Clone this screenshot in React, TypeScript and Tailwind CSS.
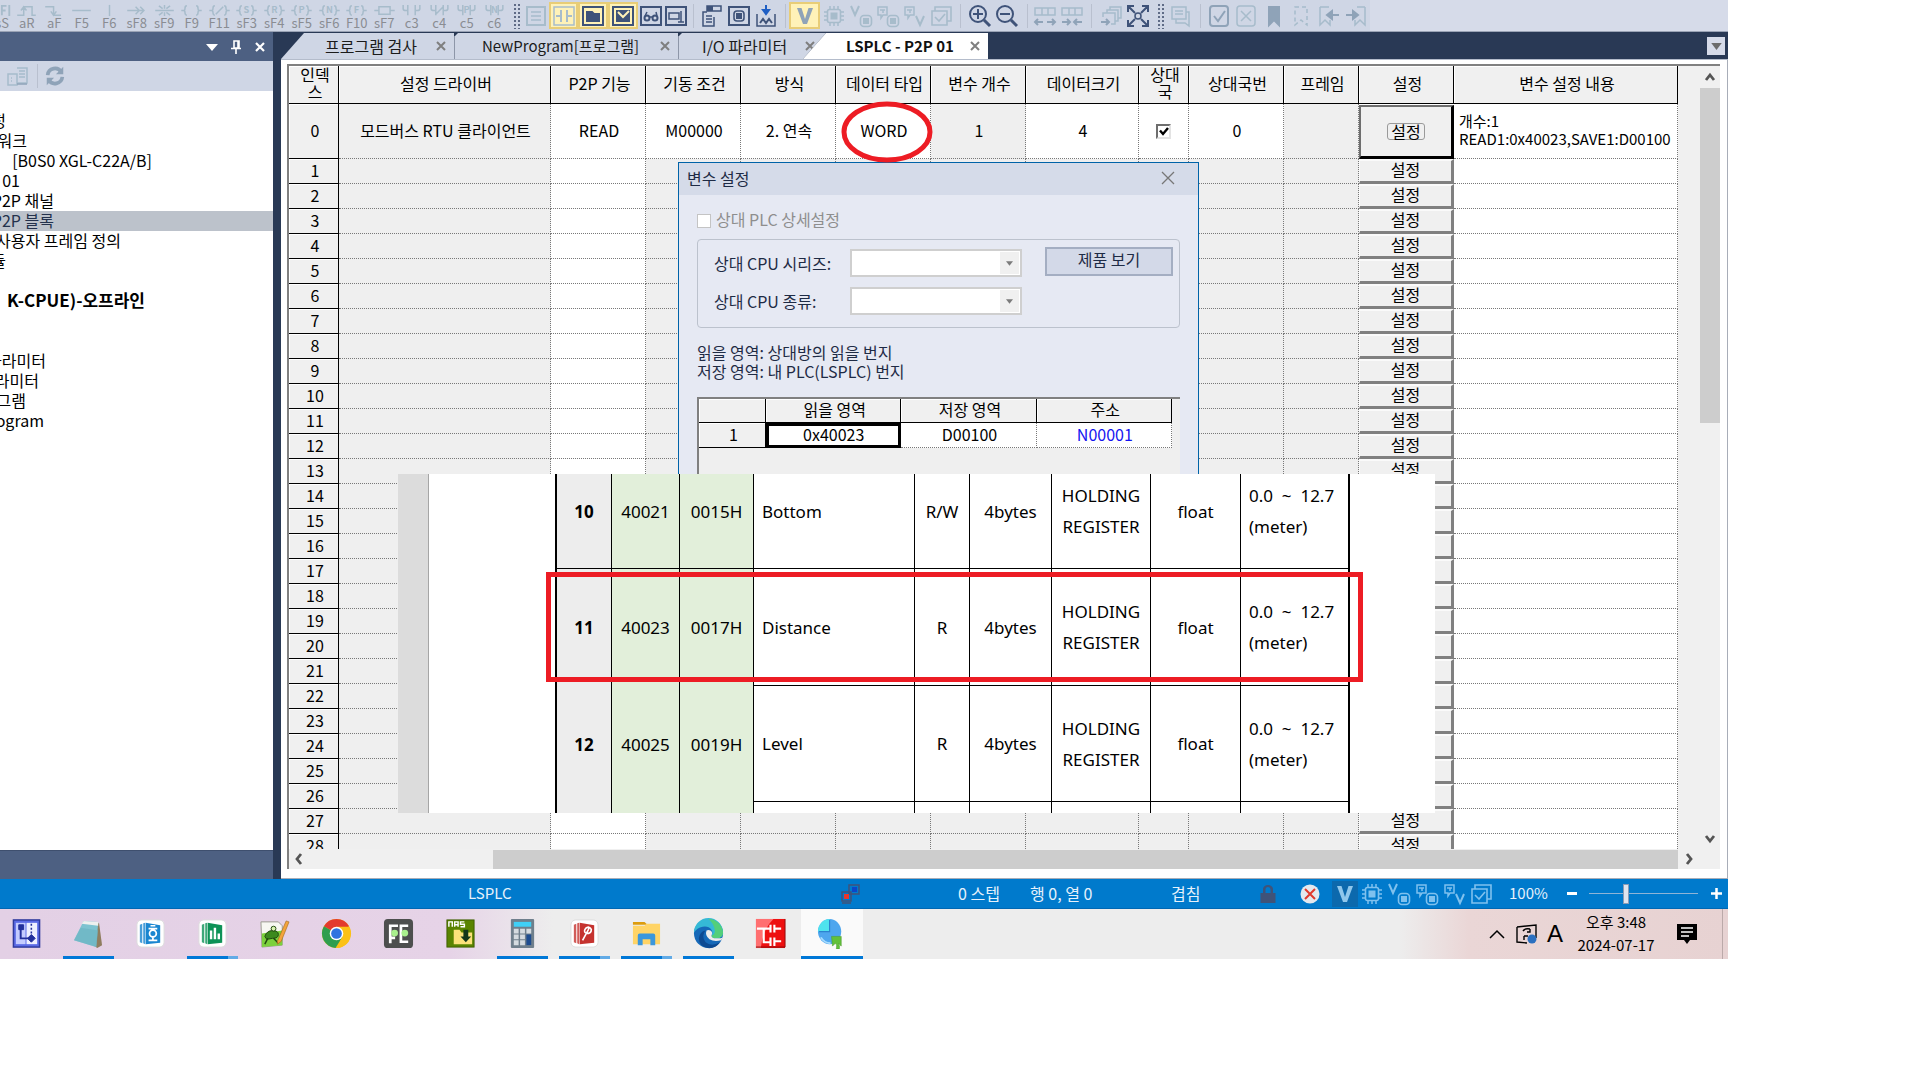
import React from "react";

const DIM = "#a7bccb";
const MID = "#8fa3b8";
const DARK = "#3f5379";

/* ---------- ladder tool bar ---------- */

const ladderTools: { label: string; kind: string }[] = [
  { label: "aR", kind: "rise" },
  { label: "aF", kind: "fall" },
  { label: "F5", kind: "hline" },
  { label: "F6", kind: "vline" },
  { label: "sF8", kind: "arrow" },
  { label: "sF9", kind: "star" },
  { label: "F9", kind: "coil" },
  { label: "F11", kind: "coilN" },
  { label: "sF3", kind: "S" },
  { label: "sF4", kind: "R" },
  { label: "sF5", kind: "P" },
  { label: "sF6", kind: "N" },
  { label: "F10", kind: "F" },
  { label: "sF7", kind: "box" },
  { label: "c3", kind: "c" },
  { label: "c4", kind: "cN" },
  { label: "c5", kind: "cP" },
  { label: "c6", kind: "cNN" },
];

const braces = "M3 7h3M9 2q-2 0-2 2.500t-1.500 2.500q1.500 0 1.500 2.500t2 2.500M19 2q2 0 2 2.500t1.500 2.500q-1.500 0-1.500 2.500t-2 2.500M22 7h3";
const shortContact = "M5 1v4q0 2 3 2h2v-6M10 7v5M23 1v4q0 2-3 2h-2v-6M18 7v5";

const ladderPaths: Record<string, string> = {
  rise: "M4 12h7V3h9v9h4M8 7l3-4 3 4",
  fall: "M4 3h9v9h8M13 3v9M10 8l3 4 3-4",
  hline: "M4 7h20",
  vline: "M14 1v12",
  arrow: "M4 7h18M13 3l4 4-4 4M18 3l4 4-4 4",
  star: "M4 7h20M14 1v4M14 9v4M8 2l4 3M20 2l-4 3M8 12l4-3M20 12l-4-3",
  coil: braces,
  coilN: braces + "M10 11l8-8",
  S: braces,
  R: braces,
  P: braces,
  N: braces,
  F: braces,
  box: "M3 7h5M20 7h5M8 3h12v8H8z",
  c: shortContact,
  cN: shortContact + "M10 11l8-8",
  cP: shortContact,
  cNN: shortContact,
};
const ladderLetters: Record<string, string> = { S: "S", R: "R", P: "P", N: "N", F: "F", cP: "P", cNN: "N" };

function LadderGlyph({ kind }: { kind: string }) {
  return (
    <svg viewBox="0 0 28 14" className="h-[13px] w-[27px]" fill="none" stroke={DIM} strokeWidth="1.6">
      <path d={ladderPaths[kind]} />
      {ladderLetters[kind] && (
        <text x="14" y="10" fontSize="10" fontWeight="700" textAnchor="middle" stroke="none" fill={DIM}>
          {ladderLetters[kind]}
        </text>
      )}
    </svg>
  );
}

/* ---------- icon tool bar ---------- */

function Svg({ children, color = DARK, size = "h-6 w-6" }: { children: React.ReactNode; color?: string; size?: string }) {
  return (
    <svg viewBox="0 0 24 24" className={size} fill="none" stroke={color} strokeWidth="2">
      {children}
    </svg>
  );
}

const chipBody = (c: string) => (
  <>
    <rect x="5.500" y="5.500" width="13" height="13" rx="2" strokeWidth="1.600" />
    <rect x="8.500" y="8.500" width="7" height="7" fill={c} stroke="none" />
    <path d="M8 2v3M12 2v3M16 2v3M8 19v3M12 19v3M16 19v3M2 8h3M2 12h3M2 16h3M19 8h3M19 12h3M19 16h3" strokeWidth="1.500" />
  </>
);
const smallChip = (c: string) => (
  <>
    <rect x="11.500" y="11.500" width="11" height="11" rx="3.500" strokeWidth="1.600" />
    <rect x="14" y="14" width="6" height="6" fill={c} stroke="none" />
  </>
);

function ToolIcon({ name, c }: { name: string; c: string }) {
  switch (name) {
    case "list":
      return <Svg color={c}><rect x="3" y="3" width="18" height="18" /><path d="M7 8h10M7 12h10M7 16h10" strokeWidth="1.500" /></Svg>;
    case "contact":
      return <Svg color={c}><rect x="2" y="3" width="20" height="18" strokeWidth="1.500" /><path d="M4 12h5M9 6v12M15 6v12M15 12h5" /></Svg>;
    case "folder":
      return <Svg color={c}><rect x="2" y="3" width="20" height="18" /><path d="M6 17V8h5l2 2h5v7z" fill={c} /></Svg>;
    case "mail":
      return <Svg color={c}><rect x="2" y="3" width="20" height="18" /><path d="M6 7h12v10H6z" fill={c} /><path d="M7 8l5 5 6-6" stroke="#fff2b8" /></Svg>;
    case "glasses":
      return <Svg color={c}><rect x="2" y="3" width="20" height="18" /><circle cx="8" cy="14" r="2.500" /><circle cx="16" cy="14" r="2.500" /><path d="M6 12l2-4M18 12l-1-4M11 13h2" strokeWidth="1.500" /></Svg>;
    case "form":
      return <Svg color={c}><rect x="2" y="3" width="20" height="18" /><path d="M5 9h10v6H5zM17 7v11M14 18h6" strokeWidth="1.500" /></Svg>;
    case "props":
      return <Svg color={c}><path d="M8 8H4v14h11v-9M7 12h6M7 15h6M7 18h6" strokeWidth="1.500" /><path d="M8 2h14v5H8z" strokeWidth="1.500" /><path d="M8 2h6v5H8z" fill={c} stroke="none" /></Svg>;
    case "chipbox":
      return <Svg color={c}><rect x="2" y="3" width="20" height="18" /><rect x="7" y="7" width="10" height="10" rx="3" strokeWidth="1.600" /><rect x="9" y="9" width="6" height="6" fill={c} stroke="none" /></Svg>;
    case "download":
      return <Svg color={c}><path d="M3 10v12h18V10" strokeWidth="1.500" /><path d="M6 19l3-4 3 4 3-4 3 4" /><path d="M12 1v8M9 6l3 4 3-4z" stroke="#1f5fc4" fill="#1f5fc4" /></Svg>;
    case "V":
      return <Svg color={c}><path d="M4 4h4.500l3.500 11 3.500-11H20l-6 16h-4z" fill={c} stroke="none" /></Svg>;
    case "chip":
      return <Svg color={c}>{chipBody(c)}</Svg>;
    case "vchip":
      return <Svg color={c}><path d="M2 2l4 9 4-9" />{smallChip(c)}</Svg>;
    case "tchip":
      return <Svg color={c}><path d="M2 3h9v8H7l-2 3v-3H2zM4 6h5M7 6v3" strokeWidth="1.500" />{smallChip(c)}</Svg>;
    case "tv":
      return <Svg color={c}><path d="M2 3h9v8H7l-2 3v-3H2zM4 6h5M7 6v3" strokeWidth="1.500" /><path d="M13 12l4 9 4-9" /></Svg>;
    case "stack":
      return <Svg color={c}><path d="M2 7h15v14H2zM5 7V3h16v14h-4M5 13l4 4 6-7" strokeWidth="1.600" /></Svg>;
    case "zoomin":
      return <Svg color={c}><circle cx="10" cy="10" r="8" /><path d="M16 16l6 6" strokeWidth="3" /><path d="M5 10h10M10 5v10" /></Svg>;
    case "zoomout":
      return <Svg color={c}><circle cx="10" cy="10" r="8" /><path d="M16 16l6 6" strokeWidth="3" /><path d="M5 10h10" /></Svg>;
    case "widen":
      return <Svg color={c}><path d="M2 4h20v7H2zM9 4v7M15 4v7" strokeWidth="1.500" /><path d="M10 18H2M5 15l-3 3 3 3M14 18h8M19 15l3 3-3 3" stroke={MID} /></Svg>;
    case "narrow":
      return <Svg color={c}><path d="M2 4h20v7H2zM9 4v7M15 4v7" strokeWidth="1.500" /><path d="M2 18h8M7 15l3 3-3 3M22 18h-8M17 15l-3 3 3 3" stroke={MID} /></Svg>;
    case "cards":
      return <Svg color={c}><path d="M4 13V9h12v11h-4M8 9V6h11v11h-3M11 6V3h11v11h-3" strokeWidth="1.500" /><path d="M2 18h8M7 15l3 3-3 3" stroke={MID} /></Svg>;
    case "expand":
      return <Svg color={c}><path d="M2 8V2h6M16 2h6v6M22 16v6h-6M8 22H2v-6M3 3l6 6M21 3l-6 6M21 21l-6-6M3 21l6-6" /><circle cx="12" cy="12" r="3" strokeWidth="1.500" /></Svg>;
    case "comments":
      return <Svg color={c}><path d="M3 3h14v12H3zM6 7h8M6 10h8M7 15v4h9l4 3V8h-3" strokeWidth="1.500" /></Svg>;
    case "check":
      return <Svg color={c}><rect x="3" y="2" width="18" height="20" rx="3" /><path d="M7 12l4 5 7-10" stroke={MID} /></Svg>;
    case "cross":
      return <Svg color={c}><rect x="3" y="2" width="18" height="20" rx="3" strokeWidth="1.500" /><path d="M7 7l10 10M17 7L7 17" strokeWidth="1.500" /></Svg>;
    case "mark":
      return <Svg color={MID}><path d="M7 3h10v18l-5-5-5 5z" fill={MID} /></Svg>;
    case "marks":
      return <Svg color={c}><path d="M6 3h12v18l-6-5-6 5z" strokeDasharray="4 3" strokeWidth="1.500" /></Svg>;
    case "prev":
      return <Svg color={c}><path d="M3 3h9M3 3v18l5-5 5 5v-5" strokeWidth="1.500" /><path d="M22 11h-11M15 7l-5 4 5 4z" stroke={MID} fill={MID} /></Svg>;
    default:
      return <Svg color={c}><path d="M21 3h-8M21 3v18l-5-5-5 5v-5" strokeWidth="1.500" /><path d="M2 11h11M9 7l5 4-5 4z" stroke={MID} fill={MID} /></Svg>;
  }
}

type Tool = [name: string, color: string, on?: boolean];

function ToolGroup({ tools, width }: { tools: Tool[]; width: string }) {
  return (
    <div className={`flex h-full items-center ${width}`}>
      {tools.map(([name, c, on]) => (
        <button
          key={name}
          aria-label={name}
          className={`flex h-[27px] flex-1 items-center justify-center ${on ? "border-2 border-[#e8cd77] bg-[#fff2b8]" : ""}`}
        >
          <ToolIcon name={name} c={c} />
        </button>
      ))}
    </div>
  );
}
const Sep = ({ m }: { m: string }) => <div className={`h-6 w-px bg-[#b9c0cf] ${m}`} />;
const Handle = () => (
  <div className="h-[26px] w-[8px] bg-[radial-gradient(circle,#5f6b86_1px,transparent_1px)] bg-[size:4px_4px]" />
);

function Toolbar() {
  return (
    <div className="flex h-8 shrink-0 items-center overflow-hidden border-b border-[#9aa3b5] bg-[#d6dbe9]">
      <div className="flex h-full items-center bg-[#cfd6e5]">
        <button className="flex h-full w-[13px] flex-col items-end pt-1 text-[13px] leading-[12px] text-[#8a8d93]">
          <svg viewBox="0 0 14 14" className="h-[13px] w-[13px]" fill="none" stroke={DIM} strokeWidth="2">
            <path d="M2 12V2h5M2 7h4M10 1v12" />
          </svg>
          <span className="pr-1">sS</span>
        </button>
        <div className="flex h-full w-[495px] items-start pt-1">
          {ladderTools.map((t) => (
            <button key={t.label} className="flex flex-1 flex-col items-center text-[13px] leading-[12px] text-[#8a8d93]">
              <LadderGlyph kind={t.kind} />
              <span>{t.label}</span>
            </button>
          ))}
        </div>
        <div className="w-[5px]" />
        <Handle />
        <div className="w-[2px]" />
        <ToolGroup
          width="w-[166px]"
          tools={[["list", DIM], ["contact", DIM, true], ["folder", DARK, true], ["mail", DARK, true], ["glasses", DARK], ["form", DARK]]}
        />
        <Sep m="ml-1 mr-[3px]" />
        <ToolGroup width="w-[83px]" tools={[["props", DARK], ["chipbox", DARK], ["download", DARK]]} />
        <Sep m="ml-[5px] mr-[3px]" />
        <ToolGroup
          width="w-[166px]"
          tools={[["V", MID, true], ["chip", DIM], ["vchip", DIM], ["tchip", DIM], ["tv", DIM], ["stack", DIM]]}
        />
        <Sep m="mx-[5px]" />
        <ToolGroup width="w-[55px]" tools={[["zoomin", DARK], ["zoomout", DARK]]} />
        <Sep m="ml-[6px] mr-[3px]" />
        <ToolGroup width="w-[55px]" tools={[["widen", DIM], ["narrow", DIM]]} />
        <Sep m="mx-[5px]" />
        <ToolGroup width="w-[55px]" tools={[["cards", DIM], ["expand", DARK]]} />
        <div className="w-[5px]" />
        <Handle />
        <div className="w-[2px]" />
        <ToolGroup width="w-[28px]" tools={[["comments", DIM]]} />
        <Sep m="ml-[5px] mr-1" />
        <ToolGroup
          width="w-[165px]"
          tools={[["check", MID], ["cross", DIM], ["mark", DIM], ["marks", DIM], ["prev", DIM], ["next", DIM]]}
        />
      </div>
    </div>
  );
}

/* ---------- project tree ---------- */

const treeRows: { text: string; width: string; bold?: boolean; on?: boolean }[] = [
  { text: "정", width: "w-[6px]" },
  { text: "워크", width: "w-[27px]" },
  { text: "[B0S0 XGL-C22A/B]", width: "w-[152px]" },
  { text: "01", width: "w-[20px]" },
  { text: "P2P 채널", width: "w-[54px]" },
  { text: "P2P 블록", width: "w-[54px]", on: true },
  { text: "사용자 프레임 정의", width: "w-[121px]" },
  { text: "듈", width: "w-[6px]" },
  { text: "", width: "w-[6px]" },
  { text: "K-CPUE)-오프라인", width: "w-[145px]", bold: true },
  { text: "", width: "w-[6px]" },
  { text: "", width: "w-[6px]" },
  { text: "파라미터", width: "w-[46px]" },
  { text: "라미터", width: "w-[39px]" },
  { text: "그램", width: "w-[26px]" },
  { text: "ogram", width: "w-[44px]" },
];

function Sidebar() {
  return (
    <aside className="flex w-[273px] shrink-0 flex-col bg-white">
      <div className="flex h-[29px] shrink-0 items-center justify-end gap-[12px] bg-[#4d6082] pr-[7px] text-white">
        <button aria-label="메뉴">
          <svg viewBox="0 0 12 8" className="h-[8px] w-[12px]" fill="currentColor"><path d="M0 1h12L6 8z" /></svg>
        </button>
        <button aria-label="고정">
          <svg viewBox="0 0 12 14" className="h-[14px] w-[12px]" fill="none" stroke="currentColor" strokeWidth="1.600">
            <path d="M4 1h5v7H4zM8 1v7M1 8.500h10M6 9v5" />
          </svg>
        </button>
        <button aria-label="닫기">
          <svg viewBox="0 0 12 12" className="h-[12px] w-[12px]" fill="none" stroke="currentColor" strokeWidth="2.200"><path d="M2 2l8 8M10 2l-8 8" /></svg>
        </button>
      </div>
      <div className="flex h-[30px] shrink-0 items-center bg-[#cfd6e5] pl-[7px]">
        <svg viewBox="0 0 22 20" className="h-5 w-[22px]" fill="none" stroke={DIM} strokeWidth="1.500">
          <path d="M1 8h9v11H1zM10 2h10v15h-10M12 5h6M12 8h6M12 11h6M4 12h1M4 15h1" />
          <path d="M10 18h10" stroke={MID} />
        </svg>
        <div className="ml-2 h-6 w-px bg-[#b9c0cf]" />
        <svg viewBox="0 0 24 24" className="ml-[6px] h-[22px] w-[22px]" fill="none" stroke={MID} strokeWidth="4">
          <path d="M4 11a8 8 0 0 1 15-3M20 13a8 8 0 0 1-15 3" />
          <path d="M21 2v8h-8zM3 22v-8h8z" fill={MID} stroke="none" />
        </svg>
      </div>
      <div className="min-h-0 flex-1 overflow-hidden pt-5 text-[16px] leading-5 text-black">
        {treeRows.map((r, i) => (
          <div key={i} className={`h-5 ${r.on ? "bg-[#bcc2cb] text-[#24324d]" : ""}`}>
            <div className={`flex h-5 justify-end overflow-hidden whitespace-nowrap leading-[18px] ${r.width} ${r.bold ? "text-[17px] font-bold" : ""}`}>
              {r.text}
            </div>
          </div>
        ))}
      </div>
      <div className="h-[29px] shrink-0 border-t border-[#3e4f6e] bg-[#4d6082]" />
    </aside>
  );
}

/* ---------- document tabs ---------- */

function CloseMark({ className = "" }: { className?: string }) {
  return (
    <svg viewBox="0 0 10 10" className={`h-[10px] w-[10px] ${className}`} fill="none" stroke="#7f7f7f" strokeWidth="2">
      <path d="M1 1l8 8M9 1l-8 8" />
    </svg>
  );
}

function Tabs() {
  return (
    <div className="flex h-[28px] shrink-0 items-end border-b border-[#b4bccb] bg-[#293955] text-[16px] leading-[24px] text-[#1b1b1b]">
      <button className="flex h-[26px] w-[173px] items-center justify-between bg-[#cfd6e5] pl-[44px] pr-[8px] [clip-path:polygon(23px_0,100%_0,100%_100%,0_100%)]">
        <span className="pb-px">프로그램 검사</span><CloseMark />
      </button>
      <button className="flex h-[26px] w-[224px] items-center justify-between border-l border-[#8d96a8] bg-[#cfd6e5] pl-[27px] pr-[8px] text-[15px] [clip-path:polygon(4px_0,100%_0,100%_100%,0_100%,0_4px)]">
        <span className="pb-px">NewProgram[프로그램]</span><CloseMark />
      </button>
      <button className="flex h-[26px] w-[148px] items-center justify-between border-l border-[#8d96a8] bg-[#cfd6e5] pl-[23px] pr-[11px] [clip-path:polygon(4px_0,100%_0,125px_100%,0_100%,0_4px)]">
        <span className="pb-px">I/O 파라미터</span><CloseMark />
      </button>
      <button className="-ml-[23px] flex h-[26px] w-[185px] items-center justify-between bg-white pl-[43px] pr-[8px] text-[15px] font-bold text-[#111] [clip-path:polygon(23px_0,100%_0,100%_100%,0_100%)]">
        <span className="pb-px">LSPLC - P2P 01</span><CloseMark />
      </button>
      <div className="flex-1" />
      <button aria-label="탭 목록" className="mb-1 mr-[3px] flex h-[18px] w-[18px] items-center justify-center bg-[#d6dbe9]">
        <svg viewBox="0 0 12 8" className="h-[7px] w-[11px]" fill="#6b6b6b"><path d="M0 0h12L6 8z" /></svg>
      </button>
    </div>
  );
}

/* ---------- P2P block grid ---------- */

const headers = ["설정 드라이버", "P2P 기능", "기동 조건", "방식", "데이터 타입", "변수 개수", "데이터크기", "상대국", "상대국번", "프레임", "설정", "변수 설정 내용"];
const dotted = "border-b border-r border-dotted border-[#787878] p-0 pb-[3px] pl-[2px]";
const idx = "border-b border-r border-black bg-[#f0f0f0] p-0 pb-[3px] pl-[3px] font-normal shadow-[inset_1px_1px_0_#fff]";

function BlockGrid() {
  return (
    <table className="w-full table-fixed border-separate border-spacing-0 text-center text-[16px] leading-[18px] text-black">
      <colgroup>
        <col className="w-[50px]" /><col className="w-[212px]" /><col className="w-[95px]" /><col className="w-[95px]" />
        <col className="w-[95px]" /><col className="w-[95px]" /><col className="w-[95px]" /><col className="w-[113px]" />
        <col className="w-[50px]" /><col className="w-[95px]" /><col className="w-[75px]" /><col className="w-[95px]" /><col />
      </colgroup>
      <thead>
        <tr className="h-[38px]">
          <th className={idx}><span className="mx-auto block w-8 break-all leading-[17px]">인덱스</span></th>
          {headers.map((h, i) => (
            <th key={i} className={idx}>
              {h === "상대국" ? <span className="mx-auto block w-8 break-all leading-[17px]">{h}</span> : h}
            </th>
          ))}
        </tr>
      </thead>
      <tbody>
        <tr className="h-[55px]">
          <th className={idx}>0</th>
          <td className={`${dotted} bg-[#efefef]`}>모드버스 RTU 클라이언트</td>
          <td className={dotted}>READ</td>
          <td className={dotted}>M00000</td>
          <td className={dotted}>2. 연속</td>
          <td className={dotted}>WORD</td>
          <td className={`${dotted} bg-[#efefef]`}>1</td>
          <td className={dotted}>4</td>
          <td className="border-b border-r border-dotted border-[#787878] p-0">
            <label className="mx-auto grid h-[15px] w-[15px]">
              <input
                type="checkbox"
                defaultChecked
                aria-label="상대국"
                className="col-start-1 row-start-1 h-[15px] w-[15px] appearance-none border-2 border-b-[#e3e3e3] border-l-[#6e6e6e] border-r-[#e3e3e3] border-t-[#6e6e6e] bg-white"
              />
              <svg viewBox="0 0 15 15" className="pointer-events-none col-start-1 row-start-1 h-[15px] w-[15px]" fill="none" stroke="#000" strokeWidth="2.400">
                <path d="M4 6.500l3 3.500 5-6" />
              </svg>
            </label>
          </td>
          <td className={dotted}>0</td>
          <td className={`${dotted} bg-[#efefef]`} />
          <td className="h-[55px] p-0">
            <button className="block h-[54px] w-full border-b-[3px] border-l-2 border-r-[3px] border-t-2 border-b-black border-l-[#6e6e6e] border-r-black border-t-[#6e6e6e] bg-[#f0f0f0]">
              <span className="inline-block rounded-[3px] border border-[#9a9a9a] px-[3px] leading-[15px]">설정</span>
            </button>
          </td>
          <td className="whitespace-nowrap border-b border-r border-dotted border-[#787878] p-0 pb-[3px] pl-[5px] text-left text-[15px] leading-[18px]">
            개수:1
            <br />
            READ1:0x40023,SAVE1:D00100
          </td>
        </tr>
        {Array.from({ length: 28 }, (_, i) => i + 1).map((n) => (
          <tr key={n} className="h-[25px]">
            <th className={idx}>{n}</th>
            <td className={`${dotted} bg-[#efefef]`} />
            <td className={dotted} />
            {Array.from({ length: 8 }, (_, k) => (
              <td key={k} className={`${dotted} bg-[#efefef]`} />
            ))}
            <td className="h-[25px] p-0">
              <button className="block h-[25px] w-full border-b-[3px] border-l border-r-[3px] border-t-2 border-b-[#808080] border-l-[#fafafa] border-r-[#808080] border-t-[#fafafa] bg-[#f0f0f0] pb-1 leading-4">
                설정
              </button>
            </td>
            <td className={dotted} />
          </tr>
        ))}
      </tbody>
    </table>
  );
}

function Arrow({ d }: { d: string }) {
  return (
    <svg viewBox="0 0 12 12" className="h-[12px] w-[12px]" fill="none" stroke="#555" strokeWidth="2.800"><path d={d} /></svg>
  );
}

function Editor() {
  return (
    <div className="flex min-h-0 flex-1 flex-col border-b border-r border-[#a8adb8] bg-white pb-[9px] pl-[6px] pr-[7px] pt-1">
      <div className="flex min-h-0 flex-1 flex-col border-l-2 border-t-2 border-[#808080]">
        <div className="flex min-h-0 flex-1 overflow-hidden">
          <div className="min-w-0 flex-1 overflow-hidden"><BlockGrid /></div>
          <div className="w-[22px] bg-[#f0f0f0]" />
          <div className="flex w-[20px] flex-col items-center bg-[#f0f0f0]">
            <button aria-label="위로" className="flex h-[22px] items-center"><Arrow d="M2 9l4-5 4 5" /></button>
            <div className="h-[335px] w-full bg-[#cdcdcd]" />
            <div className="flex-1" />
            <button aria-label="아래로" className="flex h-5 items-center"><Arrow d="M2 3l4 5 4-5" /></button>
          </div>
        </div>
        <div className="flex h-5 shrink-0 items-center bg-[#f0f0f0]">
          <button aria-label="왼쪽" className="flex w-5 justify-center"><Arrow d="M8 1L4 6l4 5" /></button>
          <div className="w-[184px]" />
          <div className="h-[19px] flex-1 bg-[#cdcdcd]" />
          <button aria-label="오른쪽" className="flex w-[22px] justify-center"><Arrow d="M4 1l4 5-4 5" /></button>
          <div className="w-5" />
        </div>
      </div>
    </div>
  );
}

/* ---------- variable dialog ---------- */

function Picker({ id, label, gap }: { id: string; label: string; gap: string }) {
  return (
    <div className={`flex items-center ${gap}`}>
      <label htmlFor={id} className="w-[136px]">{label}</label>
      <div className="grid h-[28px] w-[172px]">
        <select id={id} disabled className="col-start-1 row-start-1 appearance-none border-2 border-[#cfcfcf] bg-white opacity-100">
          <option></option>
        </select>
        <span className="pointer-events-none col-start-1 row-start-1 my-[3px] mr-[3px] flex w-[19px] items-center justify-center justify-self-end bg-[#f0f0f0]">
          <svg viewBox="0 0 8 5" className="h-[5px] w-[7px]" fill="#7b7b7b"><path d="M0 0h8L4 5z" /></svg>
        </span>
      </div>
    </div>
  );
}

function VariableDialog() {
  return (
    <section className="absolute left-[678px] top-[162px] h-[314px] w-[521px] overflow-hidden border border-b-0 border-[#0063a8] bg-[#e6e9f3] text-[16px] leading-[19px] text-[#1e2b45]">
      <div className="flex h-[32px] items-center justify-between bg-[#d5dbe9] pb-[2px] pl-2 pr-[23px]">
        <h2>변수 설정</h2>
        <button aria-label="닫기">
          <svg viewBox="0 0 14 14" className="h-[14px] w-[14px]" fill="none" stroke="#777" strokeWidth="1.300"><path d="M1 1l12 12M13 1L1 13" /></svg>
        </button>
      </div>
      <div className="px-[18px]">
        <label className="mt-[16px] flex h-[20px] items-center gap-[5px] text-[#8e8e8e]">
          <input type="checkbox" disabled className="h-[14px] w-[14px] appearance-none border border-[#c4c4c4] bg-white" />
          <span className="pb-[3px]">상대 PLC 상세설정</span>
        </label>
        <div className="mt-[8px] flex h-[89px] justify-between rounded border border-[#bcc2cd] pl-[16px] pr-[6px] pt-[9px]">
          <div>
            <Picker id="cpu-series" label="상대 CPU 시리즈:" gap="" />
            <Picker id="cpu-kind" label="상대 CPU 종류:" gap="mt-[10px]" />
          </div>
          <button className="-mt-[2px] h-[29px] w-[128px] border-2 border-[#a4aec2] bg-[#d3d9e8] pb-1">제품 보기</button>
        </div>
        <p className="mt-[15px]">읽을 영역: 상대방의 읽을 번지</p>
        <p>저장 영역: 내 PLC(LSPLC) 번지</p>
        <div className="mt-[16px] h-20 border-l-2 border-t-2 border-[#808080] bg-[#efefef] pr-[8px] text-black">
          <table className="w-full table-fixed border-separate border-spacing-0 text-center leading-[18px]">
            <colgroup><col className="w-[67px]" /><col /><col /><col /></colgroup>
            <thead>
              <tr className="h-[24px]">
                {["", "읽을 영역", "저장 영역", "주소"].map((h, i) => (
                  <th key={i} className={idx}>{h}</th>
                ))}
              </tr>
            </thead>
            <tbody>
              <tr className="h-[25px]">
                <th className={idx}>1</th>
                <td className="border-[3px] border-black bg-white p-0 pb-[2px] leading-[17px]">0x40023</td>
                <td className={`${dotted} bg-white`}>D00100</td>
                <td className={`${dotted} bg-white text-[#1414f0]`}>N00001</td>
              </tr>
            </tbody>
          </table>
        </div>
      </div>
    </section>
  );
}

/* ---------- register map excerpt ---------- */

const registers = [
  { no: "10", addr: "40021", hex: "0015H", name: "Bottom", rw: "R/W", row: "h-[95px]", pad: "pb-5" },
  { no: "11", addr: "40023", hex: "0017H", name: "Distance", rw: "R", row: "h-[117px]", pad: "" },
  { no: "12", addr: "40025", hex: "0019H", name: "Level", rw: "R", row: "h-[116px]", pad: "" },
];

function RegisterMap() {
  const cell = "border-b border-r border-black p-0";
  return (
    <section className="absolute left-[398px] top-[474px] flex h-[339px] w-[1037px] overflow-hidden bg-white">
      <div className="w-[31px] border-r border-[#a6a6a6] bg-[#dcdcdc]" />
      <table className="ml-[126px] w-[795px] table-fixed border-separate border-spacing-0 self-start border-l-2 border-black font-['Noto_Sans','Noto_Sans_CJK_KR',sans-serif] text-[17px] leading-[31px] text-black">
        <colgroup>
          <col className="w-[55px]" /><col className="w-[68px]" /><col className="w-[74px]" /><col className="w-[161px]" />
          <col className="w-[55px]" /><col className="w-[82px]" /><col className="w-[99px]" /><col className="w-[90px]" /><col />
        </colgroup>
        <tbody className="text-center">
          {registers.map((r, i) => {
            const side = i === 0 ? cell : "border-r border-black p-0";
            return (
              <tr key={r.no} className={r.row}>
                <th className={`${side} bg-[#ededed]`}><div className={r.pad}>{r.no}</div></th>
                <td className={`${side} bg-[#e2efda]`}><div className={r.pad}>{r.addr}</div></td>
                <td className={`${side} bg-[#e2efda]`}><div className={r.pad}>{r.hex}</div></td>
                <td className={`${cell} text-left`}><div className={`pl-2 ${r.pad}`}>{r.name}</div></td>
                <td className={cell}><div className={r.pad}>{r.rw}</div></td>
                <td className={cell}><div className={r.pad}>4bytes</div></td>
                <td className={cell}><div className={r.pad}>HOLDING<br />REGISTER</div></td>
                <td className={cell}><div className={r.pad}>float</div></td>
                <td className="border-b border-r-2 border-black p-0 text-left"><div className={`whitespace-pre pl-2 ${r.pad}`}>0.0  ~  12.7<br />(meter)</div></td>
              </tr>
            );
          })}
          <tr className="h-[11px]">
            <td className="border-r border-black bg-[#ededed]" />
            <td className="border-r border-black bg-[#e2efda]" />
            <td className="border-r border-black bg-[#e2efda]" />
            <td className="border-r border-black" />
            <td className="border-r border-black" />
            <td className="border-r border-black" />
            <td className="border-r border-black" />
            <td className="border-r border-black" />
            <td className="border-r-2 border-black" />
          </tr>
        </tbody>
      </table>
    </section>
  );
}

/* ---------- status bar ---------- */

function StatusBar() {
  const light = "#7fc1ee";
  return (
    <footer className="flex h-[30px] shrink-0 items-center border-b border-[#0067b3] bg-[#007acc] text-[15px] text-[#e6f1fb]">
      <div className="pl-[468px]">LSPLC</div>
      <div className="flex-1" />
      <div className="w-[118px]">
        <svg viewBox="0 0 20 20" className="h-5 w-5" fill="none" stroke="#3f5379" strokeWidth="1.500">
          <rect x="9" y="1" width="10" height="9" /><rect x="12" y="3" width="5" height="5" fill="#0b45c9" stroke="none" />
          <rect x="2" y="8" width="9" height="9" /><rect x="4" y="10" width="5" height="5" fill="#e8372c" stroke="none" />
          <path d="M2 19h9" />
        </svg>
      </div>
      <div className="w-[72px] pb-px text-[16px]">0 스텝</div>
      <div className="w-[141px] pb-px text-[16px]">행 0, 열 0</div>
      <div className="w-[88px] pb-px text-[16px]">겹침</div>
      <svg viewBox="0 0 18 20" className="h-5 w-[18px]" fill="#3f5379">
        <path d="M4 9V5a5 4 0 0 1 10 0v4h-2.500V5.500a2.500 2.500 0 0 0-5 0V9zM1.500 9h15v10h-15z" />
      </svg>
      <svg viewBox="0 0 20 20" className="ml-[23px] h-5 w-5" fill="none">
        <circle cx="10" cy="10" r="9.500" fill="#e3e8ee" /><path d="M5 5l10 10M15 5L5 15" stroke="#e0392d" strokeWidth="2" />
      </svg>
      <div className="ml-[12px] flex h-[26px] w-[26px] items-center justify-center bg-[#0c69ad]">
        <ToolIcon name="V" c="#8fc7ec" />
      </div>
      <div className="flex w-[138px] items-center">
        {["chip", "vchip", "tchip", "tv", "stack"].map((n) => (
          <span key={n} className="flex flex-1 justify-center"><ToolIcon name={n} c={light} /></span>
        ))}
      </div>
      <div className="ml-[13px] w-[58px]">100%</div>
      <button aria-label="축소" className="h-[3px] w-[10px] bg-white" />
      <input
        type="range"
        aria-label="확대 비율"
        defaultValue={33}
        className="ml-[12px] h-5 w-[109px] appearance-none bg-[linear-gradient(#8fb4d6,#8fb4d6)] bg-[size:100%_1px] bg-center bg-no-repeat [&::-webkit-slider-thumb]:h-5 [&::-webkit-slider-thumb]:w-[6px] [&::-webkit-slider-thumb]:appearance-none [&::-webkit-slider-thumb]:border [&::-webkit-slider-thumb]:border-[#8a9bb5] [&::-webkit-slider-thumb]:bg-[#dfe4ee]"
      />
      <button aria-label="확대" className="ml-[13px] mr-[6px]">
        <svg viewBox="0 0 11 11" className="h-[11px] w-[11px]" stroke="#fff" strokeWidth="2.500"><path d="M5.500 0v11M0 5.500h11" /></svg>
      </button>
    </footer>
  );
}

/* ---------- task bar ---------- */

const books = (color: string, inner: React.ReactNode) => (
  <>
    <rect x="2" y="2" width="28" height="28" rx="5" fill="#fff" stroke="#dcdcdc" />
    <path d="M5 7l2.500-1v20l-2.500-1zM8.500 5.500l2-.5v22l-2-1z" fill={color} opacity=".8" />
    <path d="M11 5l15 2.500v18L11 27z" fill={color} />
    {inner}
  </>
);

const taskApps: { name: string; run?: "one" | "many" | "active"; icon: React.ReactNode }[] = [
  {
    name: "XG-PD",
    icon: (
      <>
        <rect x="2.500" y="2" width="27" height="28" fill="#5b6be6" stroke="#2f3a9c" strokeWidth="1.500" />
        <rect x="5" y="5" width="10" height="22" fill="#c4ccff" /><rect x="16" y="5" width="11" height="22" fill="#eef0ff" />
        <path d="M10 10v11h8" fill="none" stroke="#22309c" strokeWidth="2" />
        <path d="M8 7h5v5H8zM21 17l4 4-4 4-4-4z" fill="#22309c" stroke="#22309c" />
        <path d="M21 6v12" stroke="#22309c" strokeWidth="1.600" strokeDasharray="2 2" />
      </>
    ),
  },
  {
    name: "메모장",
    run: "one",
    icon: (
      <>
        <path d="M25 4l2 2 3 22-5 3-8-6z" fill="#8f7d5f" />
        <path d="M11 3l15 1-2 26-23-7z" fill="#7dc3d0" /><path d="M11 3l15 1v4l-17-2z" fill="#eef0ee" />
        <path d="M8 10l18 3-2 17-23-7z" fill="#69b3c2" opacity=".6" />
      </>
    ),
  },
  { name: "한글", run: undefined, icon: books("#1a86d0", <path d="M14 11h9M16 8h5M18.500 12.500a3.500 3.500 0 1 1 0 7 3.500 3.500 0 0 1 0-7M18.500 19.500v3M14 23h9" fill="none" stroke="#fff" strokeWidth="1.800" />) },
  { name: "한셀", run: "many", icon: books("#0d9257", <path d="M14.500 13v9M18.500 10v12M22.500 16v6" stroke="#fff" strokeWidth="2.500" />) },
  {
    name: "Notepad++",
    icon: (
      <>
        <path d="M2 4h18l4 4v20l-21 2z" fill="#f7f7f2" stroke="#9b9b90" /><path d="M3 16l21-3v15l-21 2z" fill="#7bd13c" />
        <path d="M6 19q2-6 8-6t6 4-6 4l-6 1z" fill="#3c8a1e" stroke="#20480f" />
        <path d="M9 21l-3 6M15 21l5 5" stroke="#20480f" strokeWidth="1.500" />
        <circle cx="15" cy="11" r="2.500" fill="#d9f2b0" stroke="#20480f" />
        <path d="M19 24L28 3l3 1-8 20-4 3z" fill="#f3a43b" stroke="#a0661a" strokeWidth=".6" />
      </>
    ),
  },
  {
    name: "Chrome",
    icon: (
      <>
        <circle cx="16" cy="16" r="15" fill="#fbc116" />
        <path d="M16 16L3 8.500A15 15 0 0 1 29 8.500z" fill="#e33b2e" />
        <path d="M16 16L3 8.500A15 15 0 0 0 15 31l7-11.500z" fill="#2f9e4f" />
        <path d="M16 9h13a15 15 0 0 1-13 22l6-11z" fill="#fbc116" />
        <circle cx="16" cy="16" r="7" fill="#fff" /><circle cx="16" cy="16" r="5.500" fill="#2f74e0" />
      </>
    ),
  },
  {
    name: "RealTerm",
    icon: (
      <>
        <rect x="1" y="1" width="30" height="30" rx="4" fill="#4d4f4e" />
        <path d="M7.500 26V8h8M7.500 20.500h5M26 8h-7.500v16.500H26" stroke="#fff" strokeWidth="2.800" fill="none" />
        <circle cx="12" cy="15.500" r="3.500" fill="#a9f08d" /><circle cx="22.500" cy="15.500" r="3.500" fill="#a9f08d" />
      </>
    ),
  },
  {
    name: "NAS",
    icon: (
      <>
        <rect x="2" y="2" width="28" height="28" fill="#5a8400" stroke="#3f6000" />
        <path d="M4 9V4h3.500v5M10 9V4h3.500v5M10 7h3.500M20 4h-4v2.500h4V9h-4" fill="none" stroke="#fff" strokeWidth="1.500" />
        <path d="M9 12h6l2 3h11v12H9z" fill="#fbe27a" /><path d="M19 12h5v7h3l-5.500 6L16 19h3z" fill="#12361a" />
      </>
    ),
  },
  {
    name: "계산기",
    run: "one",
    icon: (
      <>
        <rect x="4" y="1" width="24" height="30" rx="1" fill="#6f7f8c" /><rect x="7" y="4" width="18" height="5" fill="#3fd0f7" />
        <path d="M7 11h5v5H7zM13.500 11h5v5h-5zM20 11h5v5h-5zM7 17h5v5H7zM13.500 17h5v5h-5zM7 23h5v5H7zM13.500 23h5v5h-5z" fill="#d5dbe0" />
        <path d="M20 17h5v11h-5z" fill="#1e4c8f" />
      </>
    ),
  },
  { name: "한PDF", run: "many", icon: books("#c5332f", <path d="M14 23l6-11q2-4-2-2-4 4 0 6 5 0 5-4-1-3-4-2" fill="none" stroke="#fff" strokeWidth="1.700" />) },
  {
    name: "탐색기",
    run: "many",
    icon: (
      <>
        <path d="M2 4h12l3 3H2z" fill="#dd9c0c" /><path d="M2 8h12l2-2h14v21H2z" fill="#ffd466" />
        <path d="M7 28V18q0-2 2-2h14q2 0 2 2v10h-5v-6h-8v6z" fill="#3b97dc" />
      </>
    ),
  },
  {
    name: "Edge",
    run: "one",
    icon: (
      <>
        <circle cx="16" cy="16" r="15" fill="#1669b8" />
        <path d="M1 15A15 15 0 0 1 31 15q0 6-7 6-5 0-5-3 2-3 0-6-3-4-9-3-6 1-9 6z" fill="#35b9d6" />
        <path d="M16 1A15 15 0 0 1 31 15q0 6-7 6-5 0-5-3 5-1 3-8-2-6-6-9z" fill="#53cf7a" />
        <path d="M13 13q-5 6 0 12 6 5 15 0-5 7-13 6-9-2-9-10 1-7 7-8z" fill="#0d4a92" />
        <path d="M14 13q-2 5 3 9 5 3 12 1l2-3q-2 1-7 1-5 0-5-3 2-3-1-5-2-1-4 0z" fill="#ececec" />
      </>
    ),
  },
  {
    name: "XG5000",
    icon: (
      <>
        <rect x="1" y="1" width="30" height="30" fill="#ee1010" /><path d="M1 1h18Q8 12 6 31H1z" fill="#ff6f70" />
        <path d="M2 11h14M9 11v14h7M16 7v8M20 7v8M20 11h7M16 20v9M20 20v9M20 24h7" fill="none" stroke="#fff" strokeWidth="2.200" />
        <path d="M1 30h30V1" fill="none" stroke="#8f0b0b" />
      </>
    ),
  },
  {
    name: "XP-Manager",
    run: "active",
    icon: (
      <>
        <ellipse cx="13" cy="14" rx="12" ry="13" fill="#4ea6ee" /><path d="M13 14H1A12 13 0 0 1 13 1z" fill="#4fe3ee" />
        <path d="M13 2v12H2" fill="none" stroke="#2d83cf" strokeWidth="1.200" />
        <path d="M4 20a12 12 0 0 0 10 6" fill="none" stroke="#a6dcff" strokeWidth="2" />
        <path d="M15 19h10v10l-3-3q2 3 1 6h-3q1-5-1-6l-3 3z" fill="#62c13a" stroke="#4c9d2c" strokeWidth=".6" />
      </>
    ),
  },
];

function Taskbar() {
  return (
    <div className="flex h-[50px] shrink-0 items-stretch overflow-hidden bg-[linear-gradient(90deg,#e3d0e5_0%,#e6d3e7_26%,#ededed_32%,#ededed_81%,#ead6d6_85%,#e7d2d2_100%)]">
      <div className="-ml-[5px] flex">
        {taskApps.map((a) => (
          <button key={a.name} aria-label={a.name} className={`flex w-[62px] flex-col items-center ${a.run === "active" ? "bg-[#fafafa]" : ""}`}>
            <span className="flex flex-1 items-center pt-[2px]">
              <svg viewBox="0 0 32 32" className="h-[31px] w-[31px]">{a.icon}</svg>
            </span>
            <span className={`flex h-[3px] ${a.run === "active" ? "w-full" : "w-[51px]"}`}>
              {a.run && <span className="flex-1 bg-[#0078d7]" />}
              {a.run === "many" && <span className="w-[10px] bg-[#62abe6]" />}
            </span>
          </button>
        ))}
      </div>
      <div className="flex-1" />
      <div className="flex items-center text-black">
        <svg viewBox="0 0 16 10" className="h-[10px] w-4" fill="none" stroke="#000" strokeWidth="1.500"><path d="M1 9l7-7 7 7" /></svg>
        <svg viewBox="0 0 22 20" className="ml-[11px] h-[20px] w-[22px]" fill="none" stroke="#000" strokeWidth="1.400">
          <path d="M1 3l19-2v13M1 3v15l10 1M14 5q-5-1-7 2M14 5v3h-3M8 12v4M8 12h4" />
          <circle cx="16" cy="15" r="4.500" fill="#2b70c0" stroke="none" />
        </svg>
        <span className="ml-[9px] w-[16px] text-center font-['Liberation_Sans',sans-serif] text-[24px] leading-none">A</span>
        <div className="ml-[13px] w-[80px] pb-[2px] text-center text-[15px] leading-[23px]">
          오후 3:48
          <br />
          2024-07-17
        </div>
        <svg viewBox="0 0 20 20" className="ml-[21px] h-5 w-5"><path d="M0 0h20v16h-7l-3 4-3-4H0z" fill="#000" /><path d="M4 4h12M4 8h12M4 12h8" stroke="#fff" strokeWidth="1.300" /></svg>
        <div className="ml-[25px] mr-[5px] h-[50px] w-px bg-[#bba9a9]" />
      </div>
    </div>
  );
}

export default function App() {
  return (
    <div className="flex h-screen flex-col overflow-hidden bg-white pb-[121px] font-['Noto_Sans_CJK_KR',sans-serif]">
      <div className="relative flex min-h-0 w-[90%] flex-1 flex-col">
        <Toolbar />
        <main className="flex min-h-0 flex-1 bg-[#293955]">
          <Sidebar />
          <div className="ml-[8px] flex min-w-0 flex-1 flex-col">
            <Tabs />
            <Editor />
          </div>
        </main>
        <StatusBar />
        <Taskbar />
        <VariableDialog />
        <RegisterMap />
        <svg viewBox="0 0 92 62" className="pointer-events-none absolute left-[841px] top-[101px] h-[62px] w-[92px]" fill="none" stroke="#ed1c24" strokeWidth="5">
          <ellipse cx="46" cy="31" rx="43" ry="28" />
        </svg>
        <div className="pointer-events-none absolute left-[546px] top-[572px] h-[110px] w-[817px] border-[5px] border-[#ed1c24]" />
      </div>
    </div>
  );
}
